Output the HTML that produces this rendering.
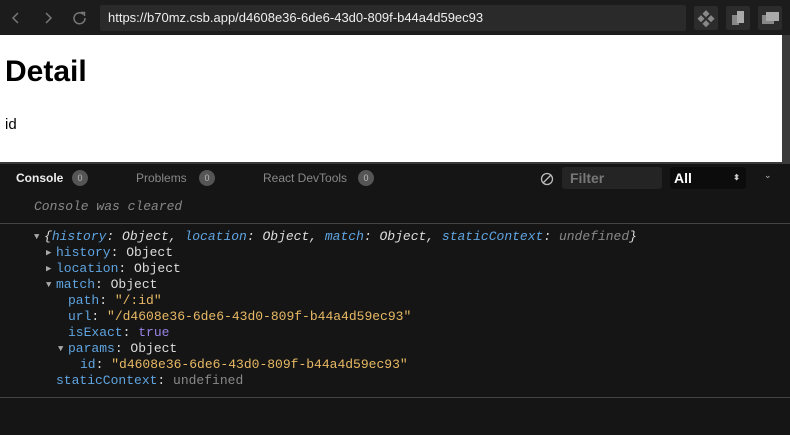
<!DOCTYPE html>
<html><head><style>
*{margin:0;padding:0;box-sizing:border-box}
body{width:790px;height:435px;background:#151515;font-family:"Liberation Sans",sans-serif;position:relative;overflow:hidden}
.top{position:absolute;left:0;top:0;width:790px;height:35px;background:#1c1c1c}
.url{position:absolute;left:100px;top:5px;width:586px;height:26px;background:#2a2a2a;border-radius:2px;color:#eee;font-size:13px;line-height:26px;padding-left:8px}
.btn{position:absolute;top:6px;width:24px;height:24px;background:#2c2c2c;border-radius:2px}
.page{position:absolute;left:0;top:35px;width:782px;height:127px;background:#fff}
.sb{position:absolute;left:782px;top:35px;width:8px;height:127px;background:#3a3a3a}
h1{position:absolute;left:5px;top:55px;font-size:30px;font-weight:bold;color:#000}
.id{position:absolute;left:5px;top:116px;font-size:15px;color:#000}
.dt{position:absolute;left:0;top:162px;width:790px;height:2px;background:#3a3a3a}
.tab{position:absolute;top:171px;font-size:12px;color:#888}
.badge{position:absolute;top:170px;width:16px;height:16px;border-radius:8px;background:#555;color:#bbb;font-size:9px;text-align:center;line-height:16px}
.mono{font-family:"Liberation Mono",monospace;font-size:13px}
.l{position:absolute;white-space:pre;line-height:16px}
.k{color:#5fa4e0}.w{color:#ddd}.s{color:#e8b964}.p{color:#9a83e6}.g{color:#888}
.line{position:absolute;left:0;width:790px;height:1px;background:#444}
.tri{display:inline-block;width:10px;color:#aaa;font-size:9px;font-style:normal;vertical-align:top;line-height:16px}
</style></head><body>
<div class="top">
<svg style="position:absolute;left:10px;top:10px" width="80" height="16" fill="none" stroke="#777" stroke-width="1.5"><path d="M8 3L3 8l5 5"/><path d="M36 3l5 5-5 5"/><path d="M73.5 4.5A5.5 5.5 0 1 0 75 8"/><path d="M71 2.5h3.5v3.5"/></svg>
<div class="url">https://b70mz.csb.app/d4608e36-6de6-43d0-809f-b44a4d59ec93</div>
<div class="btn" style="left:694px"><svg width="24" height="24"><g fill="#888"><rect x="10" y="5" width="5" height="5" transform="rotate(45 12 7)"/><rect x="5" y="10" width="5" height="5" transform="rotate(45 7 12)"/><rect x="15" y="10" width="5" height="5" transform="rotate(45 17 12)"/><rect x="10" y="15" width="5" height="5" transform="rotate(45 12 17)"/></g></svg></div>
<div class="btn" style="left:726px"><svg width="24" height="24"><rect x="6" y="9" width="7" height="10" fill="#888"/><rect x="11" y="5" width="7" height="12" fill="#aaa"/></svg></div>
<div class="btn" style="left:758px"><svg width="24" height="24"><rect x="4" y="9" width="12" height="9" fill="#888"/><rect x="8" y="6" width="13" height="9" fill="#aaa"/></svg></div>
</div>
<div class="page"></div><div class="sb"></div>
<h1>Detail</h1><div class="id">id</div>
<div class="dt"></div>
<div class="tab" style="left:16px;color:#eee;font-weight:bold">Console</div><div class="badge" style="left:72px">0</div>
<div class="tab" style="left:136px">Problems</div><div class="badge" style="left:199px">0</div>
<div class="tab" style="left:263px">React DevTools</div><div class="badge" style="left:358px">0</div>
<svg style="position:absolute;left:540px;top:172px" width="14" height="14" fill="none" stroke="#bbb" stroke-width="1.3"><circle cx="7" cy="7" r="5.5"/><path d="M3 11L11 3"/></svg>
<div style="position:absolute;left:562px;top:167px;width:100px;height:22px;background:#242424;border-radius:3px;color:#777;font-size:14px;font-weight:bold;line-height:22px;padding-left:8px">Filter</div>
<div style="position:absolute;left:670px;top:167px;width:76px;height:22px;background:#0c0c0c;border-radius:3px;color:#fff;font-size:14px;font-weight:bold;line-height:22px;padding-left:4px">All<span style="position:absolute;right:6px;font-size:8px;color:#ccc">⬍</span></div>
<div style="position:absolute;left:764px;top:170px;color:#bbb;font-size:9px">⌄</div>
<div class="mono l g" style="left:34px;top:199px;font-style:italic">Console was cleared</div>
<div class="line" style="top:223px"></div>
<div class="mono">
<div class="l" style="left:34px;top:229px"><span class="tri">▼</span><i class="w">{<span class="k">history</span>: Object, <span class="k">location</span>: Object, <span class="k">match</span>: Object, <span class="k">staticContext</span>: <span class="g">undefined</span>}</i></div>
<div class="l" style="left:46px;top:245px"><span class="tri">▶</span><span class="k">history</span><span class="w">: Object</span></div>
<div class="l" style="left:46px;top:261px"><span class="tri">▶</span><span class="k">location</span><span class="w">: Object</span></div>
<div class="l" style="left:46px;top:277px"><span class="tri">▼</span><span class="k">match</span><span class="w">: Object</span></div>
<div class="l" style="left:68px;top:293px"><span class="k">path</span><span class="w">: </span><span class="s">"/:id"</span></div>
<div class="l" style="left:68px;top:309px"><span class="k">url</span><span class="w">: </span><span class="s">"/d4608e36-6de6-43d0-809f-b44a4d59ec93"</span></div>
<div class="l" style="left:68px;top:325px"><span class="k">isExact</span><span class="w">: </span><span class="p">true</span></div>
<div class="l" style="left:58px;top:341px"><span class="tri">▼</span><span class="k">params</span><span class="w">: Object</span></div>
<div class="l" style="left:80px;top:357px"><span class="k">id</span><span class="w">: </span><span class="s">"d4608e36-6de6-43d0-809f-b44a4d59ec93"</span></div>
<div class="l" style="left:56px;top:373px"><span class="k">staticContext</span><span class="w">: </span><span class="g">undefined</span></div>
</div>
<div class="line" style="top:397px"></div>
</body></html>
